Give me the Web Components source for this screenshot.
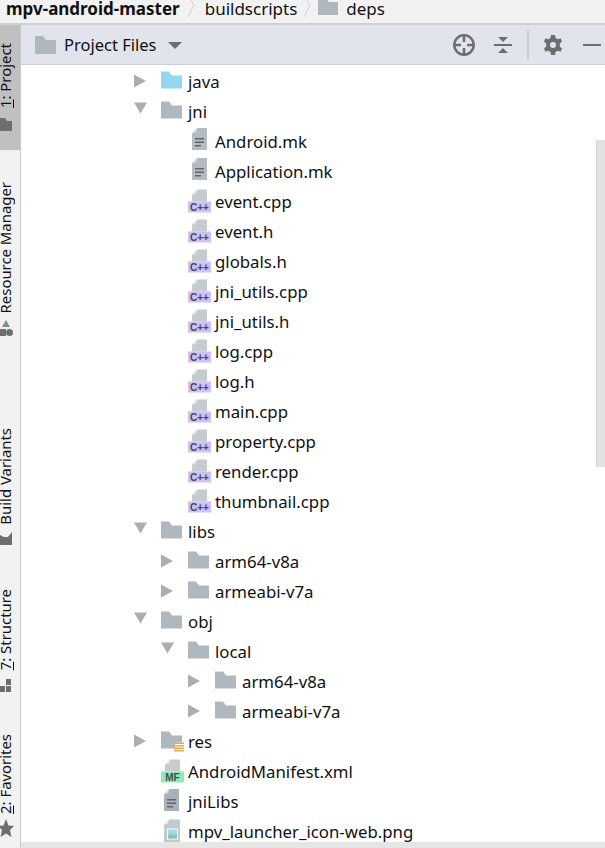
<!DOCTYPE html>
<html>
<head>
<meta charset="utf-8">
<title>Project Files</title>
<style>
    html, body { margin: 0; height: 100%; overflow: hidden; background: #fff; }
    body { font-family: "Noto Sans", "Open Sans", sans-serif; color: #111; }
</style>
</head>
<body>
<ide-window>
    <crumb-bar slot="top"></crumb-bar>
    <side-strip slot="side">
        <side-tab active icon="project" style="--before:18px;--after:19px;--gap:10px"><u>1</u>: Project</side-tab>
        <side-tab icon="resource" style="--before:32px;--after:91px;--gap:7px">Resource Manager</side-tab>
        <side-tab icon="android" style="--after:44px;--gap:7px">Build Variants</side-tab>
        <side-tab icon="structure" style="--after:42px;--gap:8px"><u>7</u>: Structure</side-tab>
        <side-tab icon="star" style="--gap:5px"><u>2</u>: Favorites</side-tab>
    </side-strip>
    <panel-header slot="header"></panel-header>
    <tree-row depth="1" arrow="right" icon="source">java</tree-row>
    <tree-row depth="1" arrow="down" icon="folder">jni</tree-row>
    <tree-row depth="2" icon="text">Android.mk</tree-row>
    <tree-row depth="2" icon="text">Application.mk</tree-row>
    <tree-row depth="2" icon="cpp">event.cpp</tree-row>
    <tree-row depth="2" icon="cpp">event.h</tree-row>
    <tree-row depth="2" icon="cpp">globals.h</tree-row>
    <tree-row depth="2" icon="cpp">jni_utils.cpp</tree-row>
    <tree-row depth="2" icon="cpp">jni_utils.h</tree-row>
    <tree-row depth="2" icon="cpp">log.cpp</tree-row>
    <tree-row depth="2" icon="cpp">log.h</tree-row>
    <tree-row depth="2" icon="cpp">main.cpp</tree-row>
    <tree-row depth="2" icon="cpp">property.cpp</tree-row>
    <tree-row depth="2" icon="cpp">render.cpp</tree-row>
    <tree-row depth="2" icon="cpp">thumbnail.cpp</tree-row>
    <tree-row depth="1" arrow="down" icon="folder">libs</tree-row>
    <tree-row depth="2" arrow="right" icon="folder">arm64-v8a</tree-row>
    <tree-row depth="2" arrow="right" icon="folder">armeabi-v7a</tree-row>
    <tree-row depth="1" arrow="down" icon="folder">obj</tree-row>
    <tree-row depth="2" arrow="down" icon="folder">local</tree-row>
    <tree-row depth="3" arrow="right" icon="folder">arm64-v8a</tree-row>
    <tree-row depth="3" arrow="right" icon="folder">armeabi-v7a</tree-row>
    <tree-row depth="1" arrow="right" icon="res">res</tree-row>
    <tree-row depth="1" icon="manifest">AndroidManifest.xml</tree-row>
    <tree-row depth="1" icon="jnilibs">jniLibs</tree-row>
    <tree-row depth="1" icon="image">mpv_launcher_icon-web.png</tree-row>
</ide-window>

<script>
const FOLDER = "M0 0h8l3 4h10v13H0z";

const svg = (w, h, body, lift = 0) =>
    `<svg width="${w}" height="${h}" viewBox="0 0 ${w} ${h}" style="display:block;overflow:visible;transform:translateY(${-lift}px)">${body}</svg>`;

const textDoc = (x, fill) => `
    <path transform="translate(${x} 0)" d="M5.500 0H15V22H0V5.500z" fill="${fill}"/>
    <path transform="translate(${x} 0)" d="M4.500 0.500V4.500H0.500z" fill="#d8dcdf"/>
    <path transform="translate(${x} 0)" d="M3 10h9v1.500H3zM3 13.500h9v1.500H3zM3 17h6v1.500H3z" fill="#5f666b"/>`;

const badgeDoc = (x) => `
    <path transform="translate(${x} 0)" d="M5.500 0H15V12H0V5.500z" fill="#c6cbcf"/>
    <path transform="translate(${x} 0)" d="M4.500 0.500V4.500H0.500z" fill="#dfe2e4"/>`;

const ICONS = {
    folder: svg(21, 17, `<path d="${FOLDER}" fill="#afb8bf"/>`, 1.5),
    source: svg(21, 17, `<path d="${FOLDER}" fill="#96d6ee"/>`, 1.5),
    res: svg(23, 21, `<path d="M0 0h8l3 4h10v7h-7v6H0z" fill="#afb8bf"/>
        <path d="M13 11h10v1.500H13zM13 13.500h10V15H13zM13 16h10v1.500H13zM13 18.500h10V20H13z" fill="#e3a94f"/>`, -0.5),
    text: svg(19, 22, textDoc(4, "#b4bcc1"), 2),
    jnilibs: svg(19, 22, textDoc(3, "#aab2b8"), 1),
    cpp: svg(23, 23, `${badgeDoc(4)}
        <rect y="12" width="23" height="11" fill="#cfc0f5"/>
        <text x="11.500" y="21.500" text-anchor="middle" font-family="Liberation Sans, sans-serif" font-weight="700" font-size="10" fill="#454a52">C++</text>`, 0.5),
    manifest: svg(23, 23, `${badgeDoc(4)}
        <rect y="12" width="23" height="11" fill="#93e6b8"/>
        <text x="11.500" y="21.500" text-anchor="middle" font-family="Liberation Sans, sans-serif" font-weight="700" font-size="10" fill="#39544a">MF</text>`, 0.5),
    image: svg(19, 23, `<path d="M8.500 0H19V23H3V5.500z" fill="#c3cace"/>
        <path d="M7.500 .500V4.500H3.500z" fill="#e3e6e8"/>
        <rect x="6" y="9" width="11" height="11" fill="#fff"/>
        <rect x="7" y="10" width="9" height="9" fill="#9fd8ee"/>
        <path d="M7 19v-3l3-2 3 2 3-1v4z" fill="#8fc79a"/>`, 0.5),
    right: svg(12, 13, `<path d="M0 0L12 6.500L0 13z" fill="#adadad"/>`, 0.5),
    down: svg(13, 11, `<path d="M0 0H13L6.500 11z" fill="#adadad"/>`, 3.5),
    project: svg(12, 13, `<path d="M0 0h5l2 3h5v10H0z" fill="#6e6e6e"/>`),
    resource: svg(13, 17, `<path d="M6 0L10 7H2z" fill="#858c90"/><rect y="9" width="6" height="7" fill="#6e6e6e"/><circle cx="9.500" cy="12.500" r="3.500" fill="#6e6e6e"/>`),
    android: svg(12, 13, `<path d="M0 3L4 5H8L12 0V13H0z" fill="#6e6e6e"/>`),
    structure: svg(11, 14, `<path d="M6 1h5v6H6zM0 8h5v6H0zM6 8h5v6H6z" fill="#6e6e6e"/>`),
    star: svg(14, 18, `<path d="M6 0L8.500 6.500L14 7L10 11L11.500 18L6 14.500L.5 18L2 11L-2 7L3.500 6.500z" fill="#6e6e6e"/>`),
};

class IdeWindow extends HTMLElement {
    constructor() {
        super();
        this.attachShadow({ mode: "open" }).innerHTML = `
            <style>
                :host {
                    display: grid;
                    grid-template-columns: 21px 1fr;
                    grid-template-rows: 25px 1fr;
                    width: 605px;
                    height: 848px;
                    overflow: hidden;
                    position: relative;
                }
                .top { grid-column: 1 / 3; }
                .panel { display: flex; flex-direction: column; min-width: 0; min-height: 0; overflow: hidden; }
                .tree { padding-top: 1px; flex: 1; min-height: 0; overflow: hidden; }
                .vbar {
                    position: absolute;
                    left: 596px;
                    top: 140px;
                    width: 9px;
                    height: 327px;
                    background: #e2e2e2;
                    border-left: 1px solid #d6d6d6;
                    box-sizing: border-box;
                }
                .hbar {
                    position: absolute;
                    left: 21px;
                    right: 0;
                    bottom: 0;
                    height: 6px;
                    background: #e6e6e6;
                }
            </style>
            <div class="top"><slot name="top"></slot></div>
            <slot name="side"></slot>
            <div class="panel">
                <slot name="header"></slot>
                <div class="tree"><slot></slot></div>
            </div>
            <div class="vbar"></div>
            <div class="hbar"></div>
        `;
    }
}

class CrumbBar extends HTMLElement {
    constructor() {
        super();
        const chev = `<svg width="8" height="24" viewBox="0 0 8 24" style="flex:none"><path d="M1 -1L7 9L1 21" fill="none" stroke="#d0d0d0" stroke-width="1"/></svg>`;
        this.attachShadow({ mode: "open" }).innerHTML = `
            <style>
                :host {
                    display: flex;
                    align-items: center;
                    height: 25px;
                    box-sizing: border-box;
                    padding: 0 0 7px 6px;
                    background: #f2f2f2;
                    border-bottom: 2px solid #cfcfcf;
                    font-size: 17px;
                    white-space: nowrap;
                    overflow: hidden;
                }
                b { font-weight: 700; }
                .sep1 { display: flex; margin: 0 10px 0 7px; }
                .sep2 { display: flex; margin: 0 7px 0 6px; }
                .folder { margin-right: 8px; }
            </style>
            <b>mpv-android-master</b>
            <span class="sep1">${chev}</span>
            <span>buildscripts</span>
            <span class="sep2">${chev}</span>
            <span class="folder">${svg(20, 16, `<path d="M0 -2h8l3 4h9v13H0z" fill="#afb8bf"/>`)}</span>
            <span>deps</span>
        `;
    }
}

class SideStrip extends HTMLElement {
    constructor() {
        super();
        this.attachShadow({ mode: "open" }).innerHTML = `
            <style>
                :host {
                    display: flex;
                    flex-direction: column;
                    height: 823px;
                    box-sizing: border-box;
                    width: 21px;
                    background: #f2f2f2;
                    border-right: 1px solid #c9c9c9;
                    overflow: hidden;
                }
            </style>
            <slot></slot>
        `;
    }
}

class SideTab extends HTMLElement {
    constructor() {
        super();
        const icon = ICONS[this.getAttribute("icon")] || "";
        this.attachShadow({ mode: "open" }).innerHTML = `
            <style>
                :host {
                    display: flex;
                    flex-direction: column;
                    align-items: flex-start;
                    gap: var(--gap, 8px);
                    flex: none;
                    padding-top: var(--before, 0px);
                    padding-bottom: var(--after, 0px);
                    font-size: 14.900px;
                    line-height: 11px;
                    color: #111;
                }
                :host([active]) { background: #c0c0c0; }
                .label {
                    writing-mode: vertical-rl;
                    transform: rotate(180deg);
                    white-space: nowrap;
                    width: 11px;
                }
            </style>
            <span class="label"><slot></slot></span>
            <span class="icon">${icon}</span>
        `;
    }
}

class PanelHeader extends HTMLElement {
    constructor() {
        super();
        this.attachShadow({ mode: "open" }).innerHTML = `
            <style>
                :host {
                    display: flex;
                    align-items: center;
                    height: 40px;
                    box-sizing: border-box;
                    padding: 0 4px 0 14px;
                    background: #e1e4ec;
                    border-bottom: 1px solid #cfcfcf;
                    font-size: 16.500px;
                    color: #111;
                }
                .name { margin-left: 8px; }
                .caret { margin: 2px auto 0 12px; }
                .tools { display: flex; align-items: center; }
                .sep { width: 2px; height: 30px; background: #cdcdcd; margin: 0 15px 0 15px; }
                svg { display: block; }
            </style>
            ${svg(21, 18, `<path d="M0 0h8l3 4h10v14H0z" fill="#afb8bf"/>`)}
            <span class="name">Project Files</span>
            <svg class="caret" width="14" height="7" viewBox="0 0 14 7"><path d="M0 0H14L7 7z" fill="#6e6e6e"/></svg>
            <div class="tools">
                <svg width="22" height="22" viewBox="0 0 22 22" style="margin-right:19px">
                    <circle cx="11" cy="11" r="9.700" fill="none" stroke="#6e6e6e" stroke-width="2.500"/>
                    <path d="M11 1v7M11 14v7M1 11h7M14 11h7" stroke="#6e6e6e" stroke-width="2.500"/>
                </svg>
                <svg width="18" height="18" viewBox="0 0 18 18">
                    <path d="M0 8h18v2H0z" fill="#6e6e6e"/>
                    <path d="M4 1h10L9 6zM4 17h10L9 12z" fill="#6e6e6e"/>
                </svg>
                <div class="sep"></div>
                <svg width="18" height="20" viewBox="0 0 18 20" style="margin-right:21px">
                    <path d="M7 0h4l.6 3 2.200 1.200 2.800-1L18 6.600l-2.200 2 0 2.800 2.200 2-1.400 3.400-2.800-1L11.600 17 11 20H7l-.6-3-2.200-1.200-2.800 1L0 13.400l2.200-2 0-2.800-2.200-2L1.400 3.200l2.800 1L6.400 3z" fill="#6e6e6e"/>
                    <circle cx="9" cy="10" r="3" fill="#e1e4ec"/>
                </svg>
                <svg width="18" height="2" viewBox="0 0 18 2"><rect width="18" height="2" fill="#6e6e6e"/></svg>
            </div>
        `;
    }
}

class TreeRow extends HTMLElement {
    constructor() {
        super();
        const depth = Number(this.getAttribute("depth") || 1);
        const arrow = ICONS[this.getAttribute("arrow")] || "";
        const icon = ICONS[this.getAttribute("icon")] || "";
        this.attachShadow({ mode: "open" }).innerHTML = `
            <style>
                :host {
                    display: flex;
                    align-items: center;
                    height: 30px;
                    padding-left: ${113 + (depth - 1) * 27}px;
                    font-size: 16.800px;
                    color: #111;
                    white-space: nowrap;
                }
                .arrow { width: 27px; flex: none; display: flex; align-items: center; }
                .icon { width: 27px; flex: none; display: flex; align-items: center; height: 22px; }
            </style>
            <span class="arrow">${arrow}</span>
            <span class="icon">${icon}</span>
            <slot></slot>
        `;
    }
}

customElements.define("ide-window", IdeWindow);
customElements.define("crumb-bar", CrumbBar);
customElements.define("side-strip", SideStrip);
customElements.define("side-tab", SideTab);
customElements.define("panel-header", PanelHeader);
customElements.define("tree-row", TreeRow);
</script>
</body>
</html>
